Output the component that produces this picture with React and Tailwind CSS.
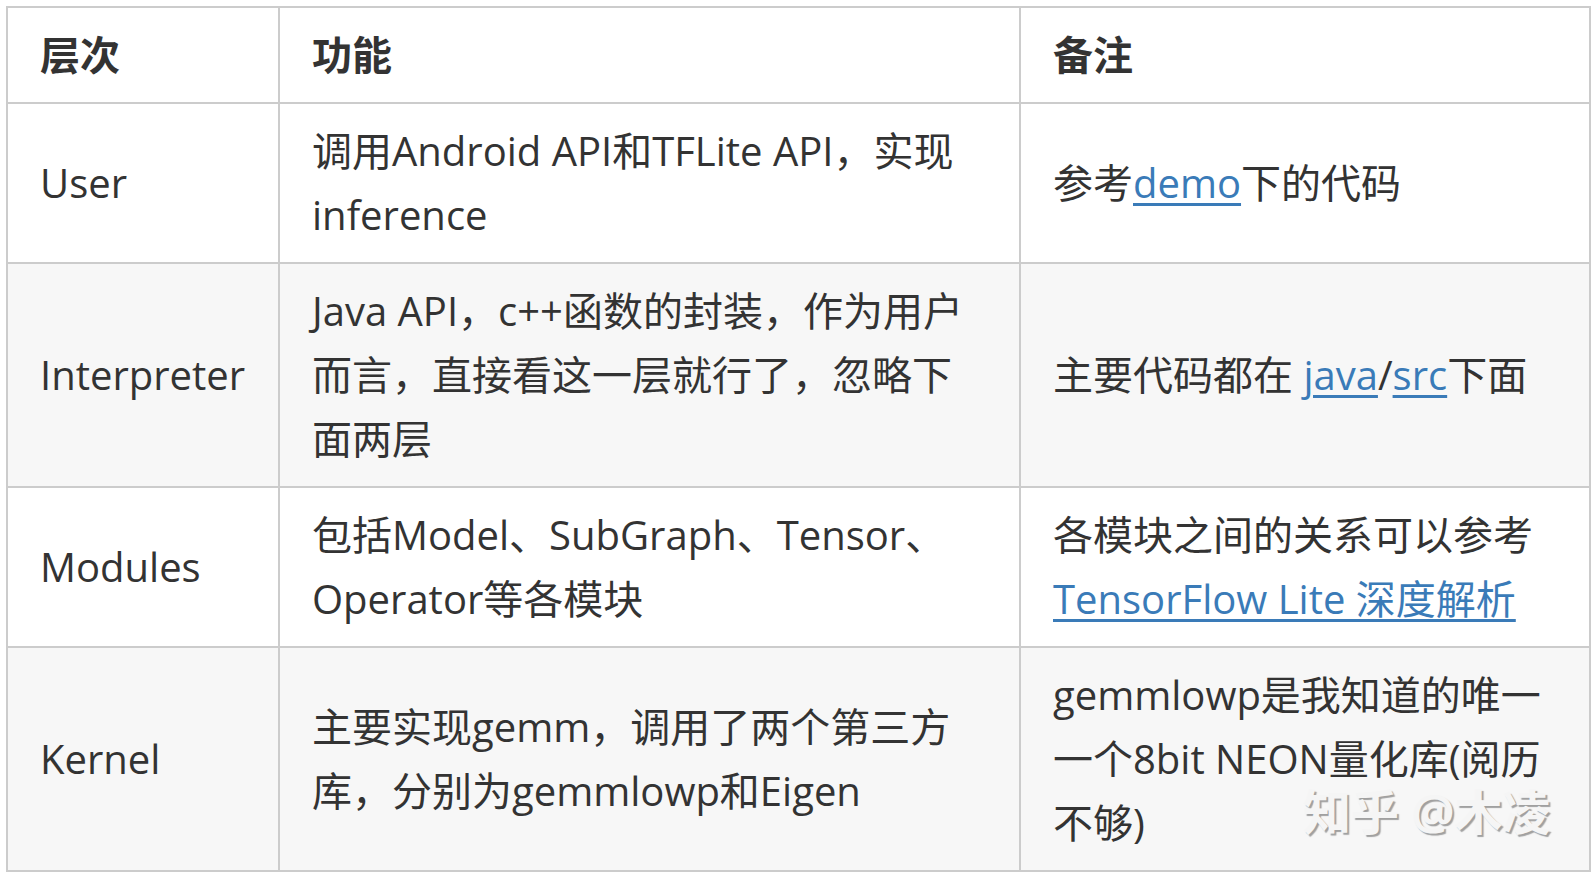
const font = { fontFamily: '"Open Sans", "Noto Sans CJK SC", sans-serif' };

function Link({ children }) {
  return <a className="text-[#3a7bb8] underline underline-offset-[5px] decoration-[3px]">{children}</a>;
}

const rows = [
  {
    layer: 'User',
    func: (<>调用Android API和TFLite API，实现<br />inference</>),
    note: (<>参考<Link>demo</Link>下的代码</>),
  },
  {
    layer: 'Interpreter',
    func: (<>Java API，c++函数的封装，作为用户<br />而言，直接看这一层就行了，忽略下<br />面两层</>),
    note: (<>主要代码都在 <Link>java</Link>/<Link>src</Link>下面</>),
  },
  {
    layer: 'Modules',
    func: (<>包括Model、SubGraph、Tensor、<br />Operator等各模块</>),
    note: (<>各模块之间的关系可以参考<br /><Link>TensorFlow Lite 深度解析</Link></>),
  },
  {
    layer: 'Kernel',
    func: (<>主要实现gemm，调用了两个第三方<br />库，分别为gemmlowp和Eigen</>),
    note: (<>gemmlowp是我知道的唯一<br />一个8bit NEON量化库(阅历<br />不够)</>),
  },
];

export default function App() {
  return (
    <div className="relative w-[1596px] h-[878px] bg-white overflow-hidden pt-[6px] pl-[6px]" style={font}>
      <table className="border-collapse text-[40px] leading-[64px] text-[#333]">
        <colgroup>
          <col className="w-[272px]" />
          <col className="w-[741px]" />
          <col className="w-[570px]" />
        </colgroup>
        <thead>
          <tr className="bg-white">
            {['层次', '功能', '备注'].map((h) => (
              <th key={h} className="border-2 border-[#cccccc] px-[32px] py-[15px] text-left font-bold">
                {h}
              </th>
            ))}
          </tr>
        </thead>
        <tbody>
          {rows.map((r, i) => (
            <tr key={r.layer} className={i % 2 === 1 ? 'bg-[#f7f7f7]' : 'bg-white'}>
              <td className="border-2 border-[#cccccc] px-[32px] py-[15px] align-middle">{r.layer}</td>
              <td className="border-2 border-[#cccccc] px-[32px] py-[15px] align-middle whitespace-nowrap">{r.func}</td>
              <td className="border-2 border-[#cccccc] px-[32px] py-[15px] align-middle whitespace-nowrap">{r.note}</td>
            </tr>
          ))}
        </tbody>
      </table>
      <div
        className="absolute left-[1303px] top-[788px] text-[48px] leading-none font-bold text-[#f5f5f5] whitespace-nowrap"
        style={{ textShadow: '2px 2px 1px #a0a0a0' }}
      >
        知乎 @木凌
      </div>
    </div>
  );
}
